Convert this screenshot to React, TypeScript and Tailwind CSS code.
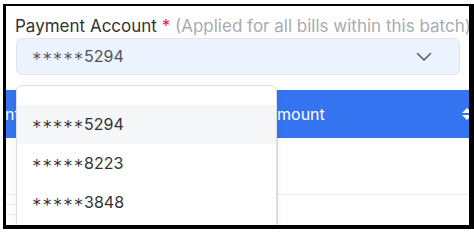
import React from "react";

const OPTIONS = ["5294", "8223", "3848"];

function Masked({ tail }: { tail: string }) {
  return (
    <span>
      <span className="inline-block align-[-4px] text-[19px] font-light leading-none tracking-[0.9px]">*****</span>
      {tail}
    </span>
  );
}

function Chevron() {
  return (
    <svg width="16" height="10" viewBox="0 0 16 10" fill="none" className="shrink-0">
      <polyline points="1.5,1.5 8,8 14.5,1.5" stroke="#55585e" strokeWidth="1.5" strokeLinecap="round" strokeLinejoin="round" />
    </svg>
  );
}

function SortIcon() {
  return (
    <svg width="10" height="13" viewBox="0 0 10 13" fill="white">
      <polygon points="5,0 10,5 0,5" />
      <polygon points="0,7 10,7 5,12" />
    </svg>
  );
}

export default function App() {
  return (
    <div
      className="h-[232px] w-[474px] overflow-hidden bg-white pl-[3px] pt-[4px]"
      style={{ fontFamily: "Inter, 'Noto Sans', sans-serif" }}
    >
      <div className="relative h-[225px] w-[471px] overflow-hidden border-t-2 border-l-[3px] border-r-[5px] border-b-[4px] border-black bg-white">
        {/* Field */}
        <div className="pt-[8px] pl-[9px]">
          <label className="block whitespace-nowrap text-[17px] leading-[24px] text-[#333]">
            Payment Account <span className="text-[#f5222d]">*</span>{" "}
            <span className="text-[#a8abb2]">(Applied for all bills within this batch)</span>
          </label>
        </div>
        <div className="ml-[10px] flex h-[37px] w-[444px] items-center justify-between rounded-[6px] border border-[#dfe5ee] bg-[#edf3fe] pl-[15px] pr-[27px]">
          <span className="text-[16px] text-[#4f5257]">
            <Masked tail="5294" />
          </span>
          <Chevron />
        </div>

        {/* Table behind dropdown */}
        <div className="mt-[15px] w-full">
          <div className="flex h-[48px] items-center bg-[#3574f0] text-[16px] text-white">
            <span className="-ml-[1px] w-[261px] shrink-0">nt</span>
            <span className="flex-1">Amount</span>
            <span className="mr-[-3px]">
              <SortIcon />
            </span>
          </div>
          <div className="flex">
            <div className="w-[271px] shrink-0">
              <div className="h-[46px]" />
              <div className="h-[11px] border-b border-[#ececec]" />
              <div className="h-[10px] border-b border-[#ececec]" />
              <div className="h-[10px] border-b border-[#ececec]" />
            </div>
            <div className="flex-1 border-l border-[#e3e3e3]">
              <div className="h-[57px] border-b border-[#ececec]" />
              <div className="h-[40px]" />
            </div>
          </div>
        </div>

        {/* Dropdown overlay */}
        <div className="absolute left-[10px] top-[79px] h-[160px] w-[261px] rounded-t-[6px] border border-[#dcdfe4] bg-white pt-[19px] shadow-[0_2px_8px_rgba(0,0,0,0.06)]">
          {OPTIONS.map((tail, i) => (
            <div
              key={tail}
              className={
                i === 0
                  ? "flex h-[39px] items-center bg-[#f5f6f8] pl-[15px] text-[16px] text-[#333]"
                  : "flex h-[39px] items-center pl-[15px] text-[16px] text-[#333]"
              }
            >
              <Masked tail={tail} />
            </div>
          ))}
        </div>
      </div>
    </div>
  );
}
